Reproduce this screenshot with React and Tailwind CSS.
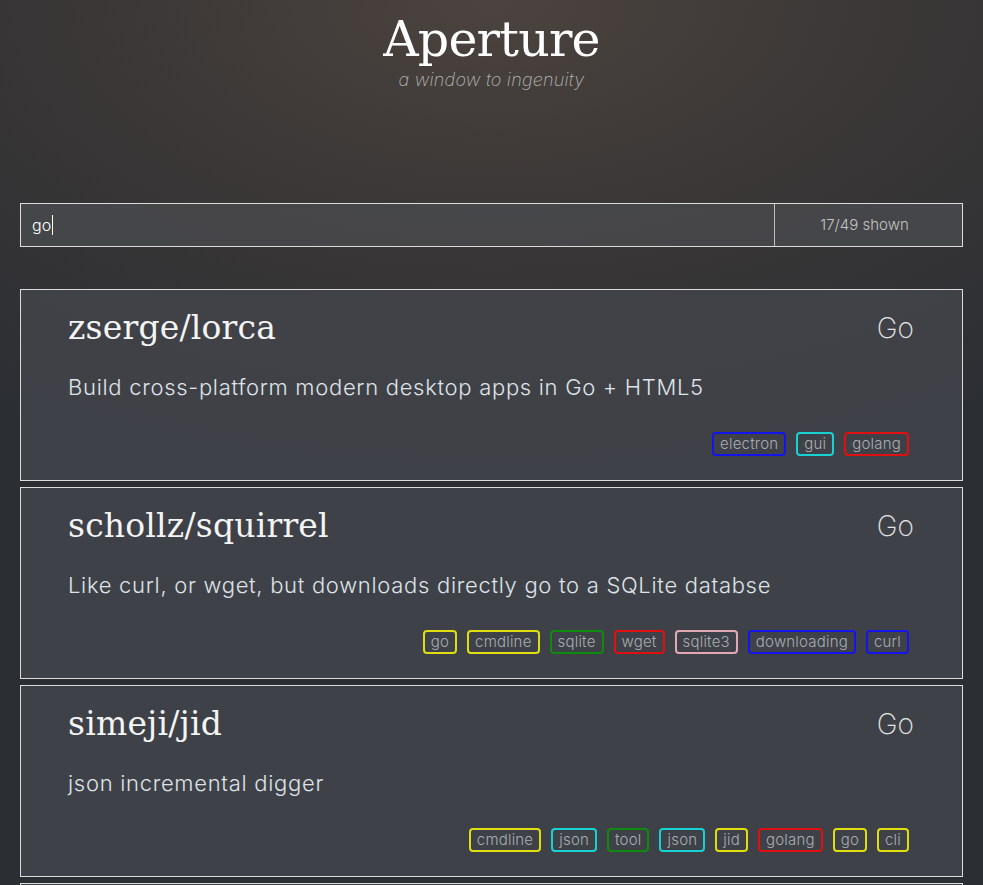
const repos = [
  {
    name: 'zserge/lorca',
    lang: 'Go',
    desc: 'Build cross-platform modern desktop apps in Go + HTML5',
    tags: [
      ['electron', 'border-[#1414ee]'],
      ['gui', 'border-[#17d2d2]'],
      ['golang', 'border-[#e01010]'],
    ],
  },
  {
    name: 'schollz/squirrel',
    lang: 'Go',
    desc: 'Like curl, or wget, but downloads directly go to a SQLite databse',
    tags: [
      ['go', 'border-[#dede10]'],
      ['cmdline', 'border-[#dede10]'],
      ['sqlite', 'border-[#0e8a0e]'],
      ['wget', 'border-[#e01010]'],
      ['sqlite3', 'border-[#e2a8b6]'],
      ['downloading', 'border-[#1414ee]'],
      ['curl', 'border-[#1414ee]'],
    ],
  },
  {
    name: 'simeji/jid',
    lang: 'Go',
    desc: 'json incremental digger',
    tags: [
      ['cmdline', 'border-[#dede10]'],
      ['json', 'border-[#17d2d2]'],
      ['tool', 'border-[#0e8a0e]'],
      ['json', 'border-[#17d2d2]'],
      ['jid', 'border-[#dede10]'],
      ['golang', 'border-[#e01010]'],
      ['go', 'border-[#dede10]'],
      ['cli', 'border-[#dede10]'],
    ],
  },
  {
    name: 'gohugoio/hugo',
    lang: 'Go',
    desc: 'The world’s fastest framework for building websites.',
    tags: [],
  },
];

function RepoCard({ repo }) {
  return (
    <div className="border border-[#dcdcdc] bg-[#43464c]/80 pt-[18px] pb-[24px] pl-[47px] pr-[48px]">
      <div className="flex items-center justify-between">
        <h2 className="font-['DejaVu_Serif',serif] text-[33px] leading-[40px] tracking-[0.2px] text-[#f4f4f4]">
          {repo.name}
        </h2>
        <span className="font-['Inter',sans-serif] font-extralight text-[28px] leading-[40px] text-[#e2e2e2]">
          {repo.lang}
        </span>
      </div>
      <p className="mt-[23px] font-['Inter',sans-serif] font-light text-[22px] leading-[32px] tracking-[0.7px] text-[#dfe3e8]">
        {repo.desc}
      </p>
      <div className="mt-[29px] flex justify-end gap-[10px] pr-[5px]">
        {repo.tags.map(([t, c], i) => (
          <span
            key={i}
            className={`border-2 ${c} rounded-[4px] px-[6px] h-[24px] flex items-center font-['Inter',sans-serif] font-light text-[15px] tracking-[0.2px] text-[#a9adb3]`}
          >
            {t}
          </span>
        ))}
      </div>
    </div>
  );
}

export default function App() {
  return (
    <div className="min-h-screen h-[885px] overflow-hidden bg-[#2a2d32] bg-[radial-gradient(ellipse_90%_55%_at_50%_0%,#4b433f_0%,#3a3736_45%,#2b2e33_100%)] px-[20px]">
      {/* Header */}
      <header className="pt-[11px] text-center">
        <h1 className="font-['DejaVu_Serif',serif] text-[49px] leading-[58px] text-white tracking-[-0.8px]">
          Aperture
        </h1>
        <p className="font-['Inter',sans-serif] font-extralight italic text-[18px] leading-[22px] tracking-[0.2px] text-[#b4b4b4]">
          a window to ingenuity
        </p>
      </header>

      {/* Search */}
      <div className="mt-[112px] flex h-[44px] border border-[#dcdcdc] bg-[#4a4b4f]/80">
        <div className="flex flex-1 items-center pl-[11px] font-['Inter',sans-serif] font-light text-[16px] text-white">
          go<span className="ml-[1px] inline-block h-[20px] w-px bg-white" />
        </div>
        <div className="flex w-[188px] items-center justify-center border-l border-[#bdbdbd] pr-[8px] font-['Inter',sans-serif] font-light text-[15px] text-[#c4c4c4]">
          17/49 shown
        </div>
      </div>

      {/* Results */}
      <div className="mt-[42px] flex flex-col gap-[6px]">
        {repos.map((r) => (
          <RepoCard key={r.name} repo={r} />
        ))}
      </div>
    </div>
  );
}
